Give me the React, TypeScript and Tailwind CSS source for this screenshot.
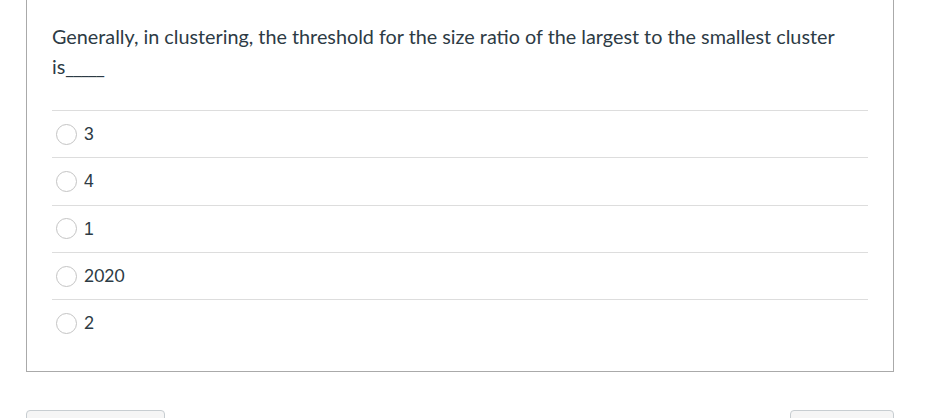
const options = [
  { label: "3", font: "font-['Liberation_Sans',Arial,sans-serif]" },
  { label: "4", font: "font-['Liberation_Sans',Arial,sans-serif]" },
  { label: "1", font: "font-['Liberation_Sans',Arial,sans-serif]" },
  { label: "2020", font: "font-['Lato',sans-serif]" },
  { label: "2", font: "font-['Lato',sans-serif]" },
];

export default function App() {
  return (
    <div className="w-[929px] h-[418px] overflow-hidden bg-white pl-[26px] font-['Lato',sans-serif] text-[#2d3b45]">
      <div className="w-[868px] border-x border-b border-[#aaaaaa] px-[25px] pt-[21px] pb-[25px]">
        <p className="text-[19.8px] leading-[30px]">
          Generally, in clustering, the threshold for the size ratio of the largest to the smallest cluster
          <br />
          is<span className="tracking-[-1.5px]">_____</span>
        </p>
        <div className="mt-[29px]">
          {options.map((o) => (
            <div
              key={o.label}
              className="flex h-[47.3px] items-center border-t border-[#dddddd] pl-[4px]"
            >
              <span className="block h-[21px] w-[21px] rounded-full border-[1.5px] border-[#c4c4c4] bg-white" />
              <span className={`ml-[7px] text-[17.5px] ${o.font}`}>{o.label}</span>
            </div>
          ))}
        </div>
      </div>
      <div className="mt-[38px] flex w-[868px] justify-between">
        <div className="h-[40px] w-[139px] rounded-[4px] border border-[#c7cdd1] bg-[#f5f5f5]" />
        <div className="h-[40px] w-[104px] rounded-[4px] border border-[#c7cdd1] bg-[#f5f5f5]" />
      </div>
    </div>
  );
}
